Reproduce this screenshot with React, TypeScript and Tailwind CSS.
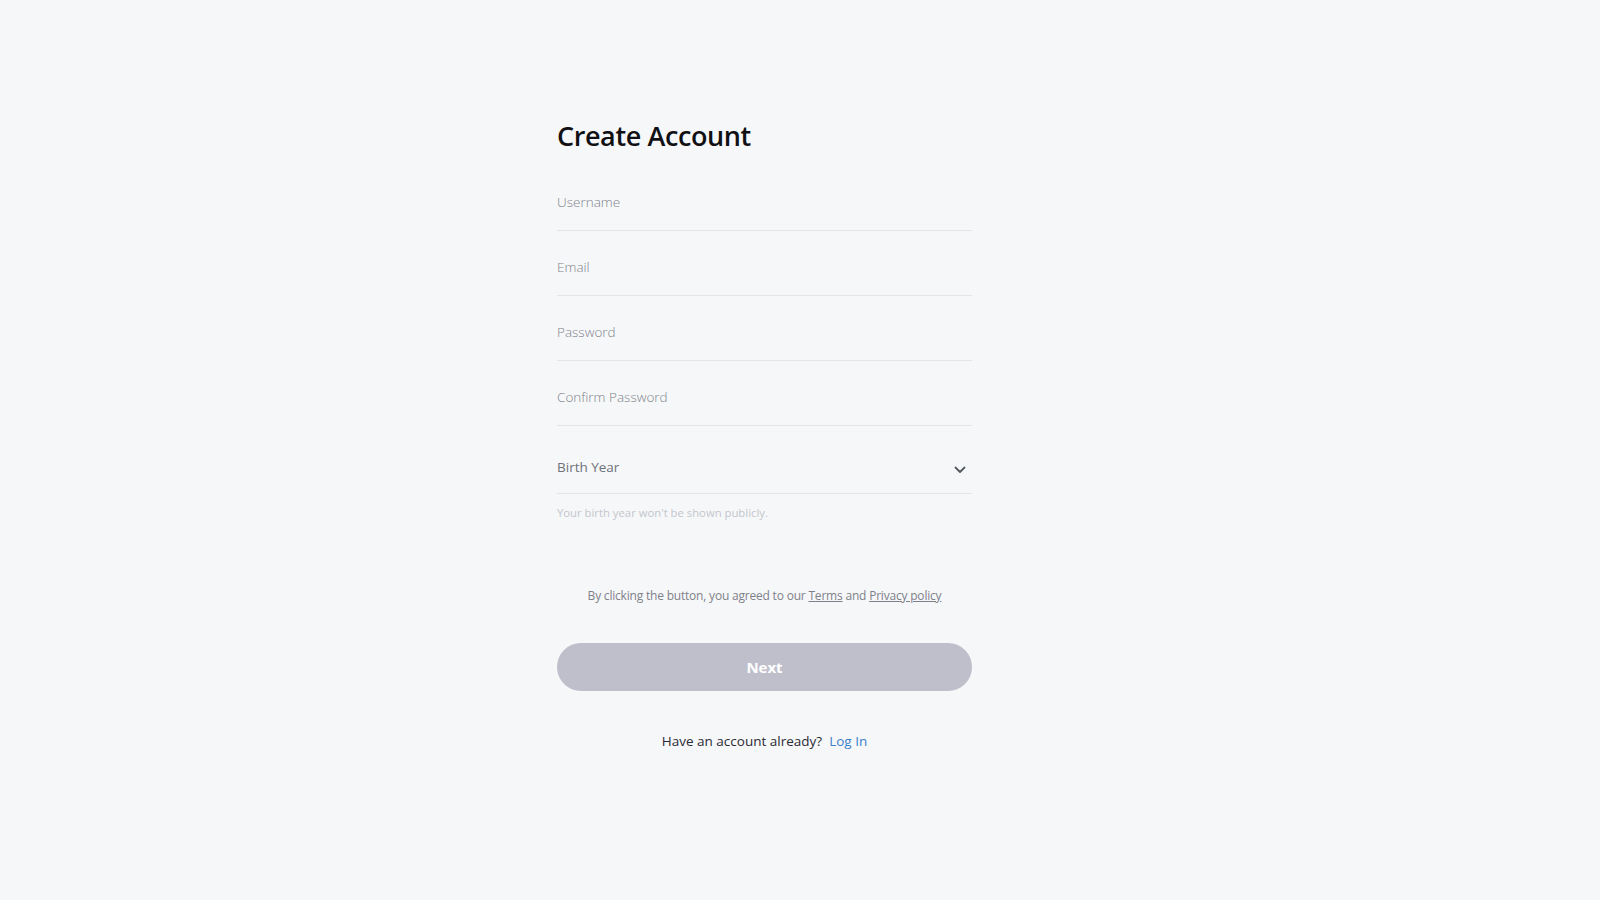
import React from "react";

const font = { fontFamily: '"Open Sans", "Noto Sans", sans-serif' };

function Field({ label }: { label: string }) {
  return (
    <div className="h-[65px] border-b border-[#e3e5e9] flex items-center pt-[8px]">
      <input
        className="w-full bg-transparent outline-none text-[13.5px] font-light text-[#2b2b33] placeholder:text-[#7f838b]"
        placeholder={label}
        style={font}
      />
    </div>
  );
}

export default function App() {
  return (
    <div className="min-h-screen w-full bg-[#f6f7f9] flex justify-center pr-[71px]" style={font}>
      <div className="w-[415px] pt-[116px]">
        <h1 className="text-[27px] font-semibold text-[#111114] leading-[40px] tracking-[-0.4px]">Create Account</h1>
        <div className="mt-[10px]">
          <Field label="Username" />
          <Field label="Email" />
          <Field label="Password" />
          <Field label="Confirm Password" />
          <div className="h-[68px] border-b border-[#e3e5e9] flex items-center justify-between pt-[15px] pr-[6px]">
            <span className="text-[13.5px] text-[#6e7279]">Birth Year</span>
            <svg width="12" height="8" viewBox="0 0 12 8" fill="none" className="mt-[6px]">
              <path d="M1.5 1.5L6 6L10.5 1.5" stroke="#555960" strokeWidth="1.8" strokeLinecap="round" strokeLinejoin="round" />
            </svg>
          </div>
          <p className="mt-[11px] text-[11.3px] text-[#c3c6cc]">Your birth year won't be shown publicly.</p>
        </div>
        <p className="mt-[65px] text-center text-[12px] tracking-[-0.2px] text-[#7e8189]">
          By clicking the button, you agreed to our{" "}
          <a className="underline">Terms</a> and <a className="underline">Privacy policy</a>
        </p>
        <button className="mt-[38px] w-full h-[48px] rounded-full bg-[#bfbfcc] text-white font-bold text-[15px]" style={font}>
          Next
        </button>
        <p className="mt-[40px] text-center text-[13.5px] text-[#2b2b33]">
          Have an account already?&nbsp;&nbsp;<a className="text-[#3d7fc9]">Log In</a>
        </p>
      </div>
    </div>
  );
}
